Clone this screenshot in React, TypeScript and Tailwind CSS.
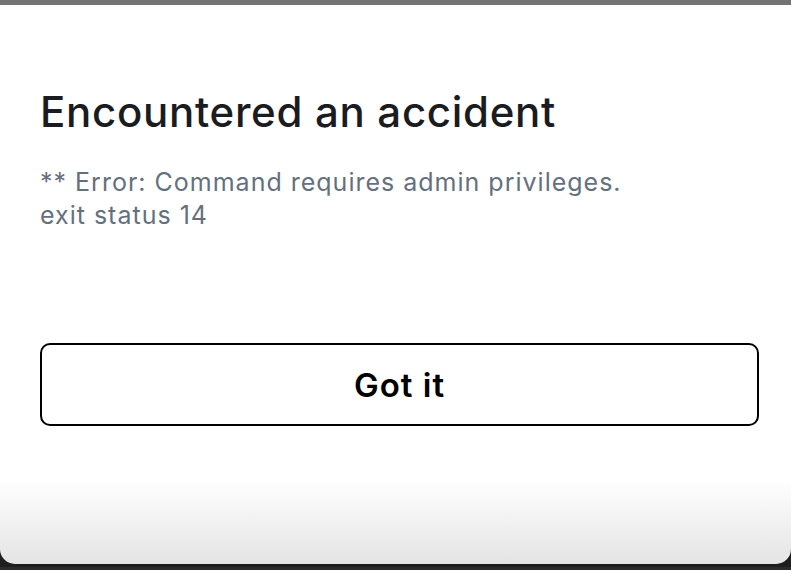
import React from "react";

export default function App() {
  return (
    <div className="w-[791px] h-[570px] bg-[#1e1e1e] flex flex-col overflow-hidden" style={{ fontFamily: "Inter, 'Noto Sans', sans-serif" }}>
      <div className="h-[5px] bg-[#737373] shrink-0" />
      <div className="h-[559px] shrink-0 rounded-b-[15px] bg-gradient-to-b from-white from-85% to-[#e4e4e4] px-[40px] pt-[83px] flex flex-col">
        <h1 className="text-[42px] leading-[48px] font-medium text-[#1a1c1f] tracking-[0.7px]">Encountered an accident</h1>
        <p className="mt-[30px] text-[25px] leading-[33px] text-[#64707e] tracking-[1px]">
          ** Error: Command requires admin privileges.
          <br />
          exit status 14
        </p>
        <button className="mt-[111px] h-[83px] w-[719px] shrink-0 rounded-[10px] border-2 border-black bg-white pt-[2px] text-[33px] font-semibold text-black tracking-[1px]">
          Got it
        </button>
      </div>
      <div className="h-[3px] shrink-0" />
      <div className="flex-1 bg-[#2b2b2b]" />
    </div>
  );
}
